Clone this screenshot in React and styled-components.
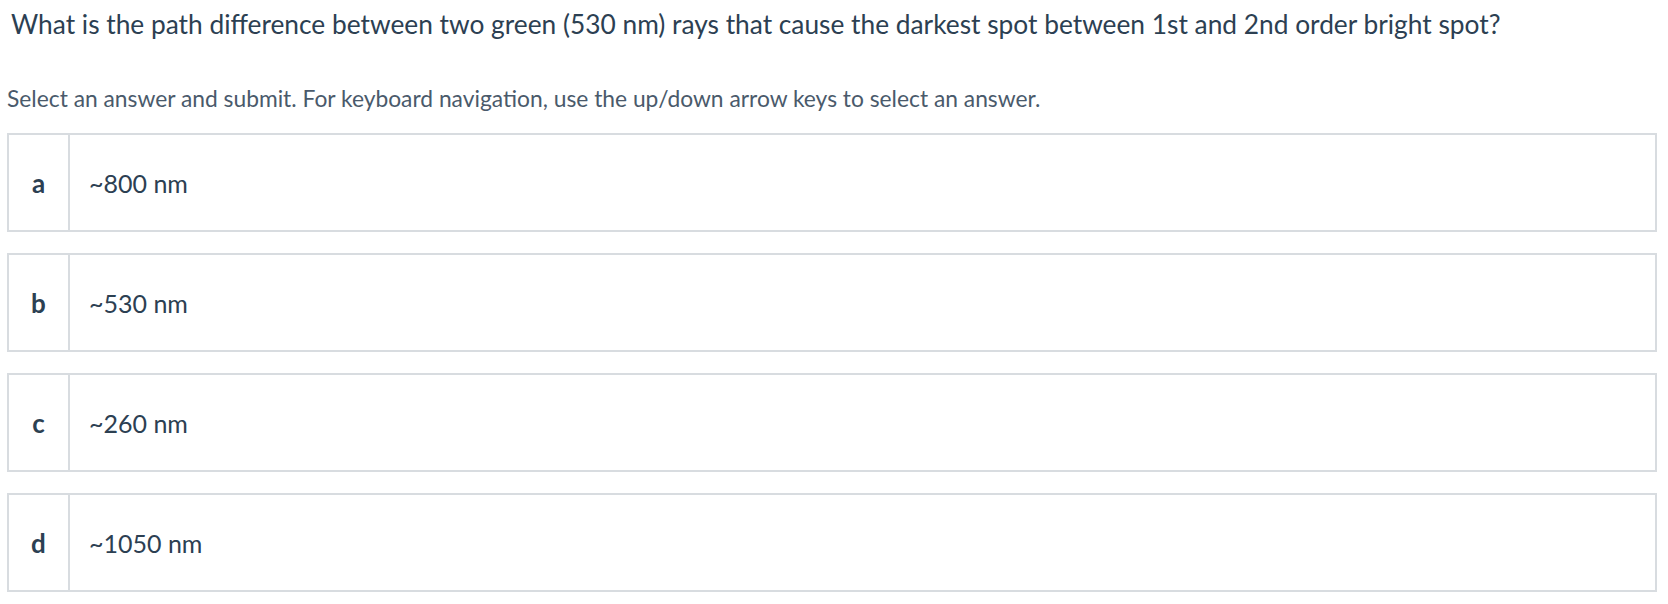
import React from "react";
import styled, { createGlobalStyle } from "styled-components";

const GlobalStyle = createGlobalStyle`
  body {
    margin: 0;
    background: #ffffff;
    font-family: Lato, "Open Sans", sans-serif;
  }
`;

const Page = styled.div`
  width: 1650px;
  padding: 0 11px 0 7px;
`;

const Question = styled.h2`
  margin: 0;
  padding: 7px 0 0 4px;
  font-size: 26.3px;
  font-weight: 400;
  line-height: 34px;
  color: #2c4052;
`;

const Instructions = styled.p`
  margin: 43px 0 0;
  font-size: 22.8px;
  line-height: 28px;
  color: #4a5a6b;
`;

const AnswerList = styled.div`
  display: flex;
  flex-direction: column;
  gap: 21px;
  margin-top: 21px;
`;

const AnswerRow = styled.div`
  display: flex;
  height: 95px;
  border: 2px solid #d8dce0;
  background: #ffffff;
  cursor: pointer;
`;

const Letter = styled.div`
  display: flex;
  align-items: center;
  justify-content: center;
  width: 59px;
  border-right: 2px solid #d8dce0;
  font-size: 26px;
  font-weight: 700;
  color: #2c4052;
`;

const AnswerText = styled.div`
  display: flex;
  align-items: center;
  padding-left: 19px;
  font-size: 25px;
  color: #2c4052;
`;

const answers = [
  { letter: "a", text: "~800 nm" },
  { letter: "b", text: "~530 nm" },
  { letter: "c", text: "~260 nm" },
  { letter: "d", text: "~1050 nm" },
];

const App = () => {
  return (
    <Page>
      <GlobalStyle />
      <Question>
        What is the path difference between two green (530 nm) rays that cause the darkest spot between 1st and 2nd order bright spot?
      </Question>
      <Instructions>
        Select an answer and submit. For keyboard navigation, use the up/down arrow keys to select an answer.
      </Instructions>
      <AnswerList>
        {answers.map(({ letter, text }) => (
          <AnswerRow key={letter}>
            <Letter>{letter}</Letter>
            <AnswerText>{text}</AnswerText>
          </AnswerRow>
        ))}
      </AnswerList>
    </Page>
  );
};

export default App;
